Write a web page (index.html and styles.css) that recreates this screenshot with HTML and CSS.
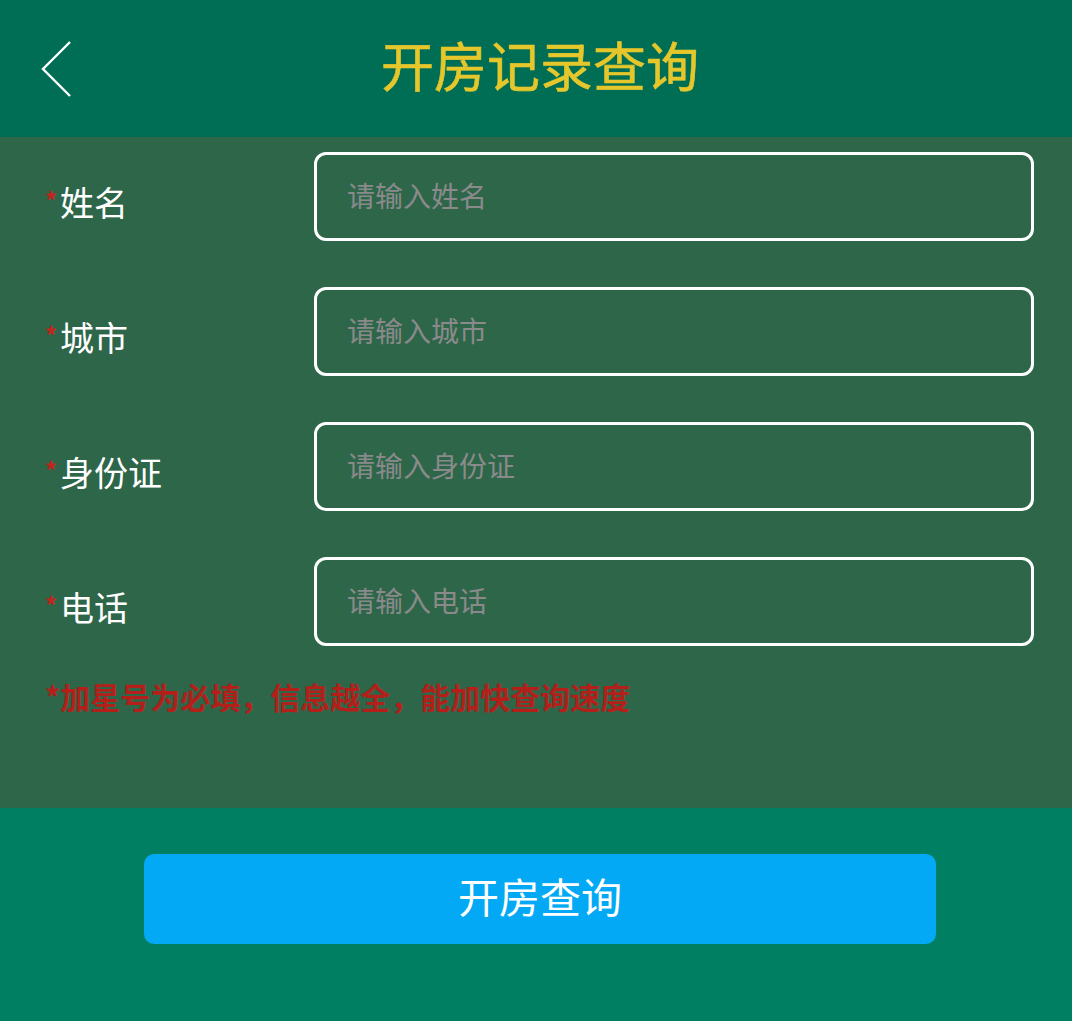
FILE: index.html
```html
<!DOCTYPE html>
<html lang="zh-CN">
<head>
<meta charset="utf-8">
<title>开房记录查询</title>
<link rel="stylesheet" href="styles.css">
</head>
<body>
<header class="topbar">
  <svg class="back" width="32" height="58" viewBox="0 0 32 58"><polyline points="29,2 2,29 29,56" fill="none" stroke="#ffffff" stroke-width="2.4"/></svg>
  <h1 class="title">开房记录查询</h1>
</header>
<main class="form">
  <div class="row">
    <label class="label"><span class="star">*</span>姓名</label>
    <div class="input"><span class="ph">请输入姓名</span></div>
  </div>
  <div class="row">
    <label class="label"><span class="star">*</span>城市</label>
    <div class="input"><span class="ph">请输入城市</span></div>
  </div>
  <div class="row">
    <label class="label"><span class="star">*</span>身份证</label>
    <div class="input"><span class="ph">请输入身份证</span></div>
  </div>
  <div class="row">
    <label class="label"><span class="star">*</span>电话</label>
    <div class="input"><span class="ph">请输入电话</span></div>
  </div>
  <p class="note">*加星号为必填，信息越全，能加快查询速度</p>
</main>
<footer class="bottom">
  <button class="submit">开房查询</button>
</footer>
</body>
</html>
```
FILE: styles.css
```css
* { box-sizing: border-box; }
html, body { margin: 0; padding: 0; }
body {
  width: 1072px;
  height: 1021px;
  font-family: "Noto Sans CJK SC", "Noto Sans", sans-serif;
  background: #007f63;
  overflow: hidden;
}
.topbar {
  height: 137px;
  background: #006e54;
  display: flex;
  align-items: center;
  justify-content: center;
  position: relative;
}
.back {
  position: absolute;
  left: 41px;
  top: 40px;
}
.title {
  margin: 0;
  font-size: 53px;
  font-weight: 400;
  color: #e5c72c;
  line-height: 1;
  padding-left: 8px;
  padding-bottom: 8px;
  -webkit-text-stroke: 0.6px #e5c72c;
}
.form {
  height: 671px;
  background: #2e664a;
  padding: 15px 38px 0 45px;
  display: flex;
  flex-direction: column;
  gap: 46px;
}
.row {
  display: flex;
  align-items: center;
  height: 89px;
}
.label {
  width: 269px;
  color: #ffffff;
  font-size: 34px;
  padding-top: 10px;
  line-height: 1;
  display: flex;
  align-items: center;
}
.star {
  color: #c0261d;
  font-size: 24px;
  width: 15px;
  margin-top: -4px;
  font-weight: 700;
}
.input {
  flex: 1;
  height: 89px;
  border: 3px solid #ffffff;
  border-radius: 12px;
  display: flex;
  align-items: center;
  padding-left: 30px;
  padding-bottom: 4px;
}
.ph {
  color: #8a8a8a;
  font-size: 28px;
}
.note {
  margin: 0;
  margin-top: -11px;
  color: #b3201a;
  font-size: 30px;
  font-weight: 700;
  line-height: 1;
}
.bottom {
  height: 213px;
  padding-top: 46px;
  padding-left: 8px;
  display: flex;
  justify-content: center;
}
.submit {
  width: 792px;
  height: 90px;
  border: none;
  border-radius: 10px;
  background: #03a9f4;
  color: #ffffff;
  font-family: "Noto Sans CJK SC", sans-serif;
  font-size: 41px;
  padding-bottom: 10px;
}
```
